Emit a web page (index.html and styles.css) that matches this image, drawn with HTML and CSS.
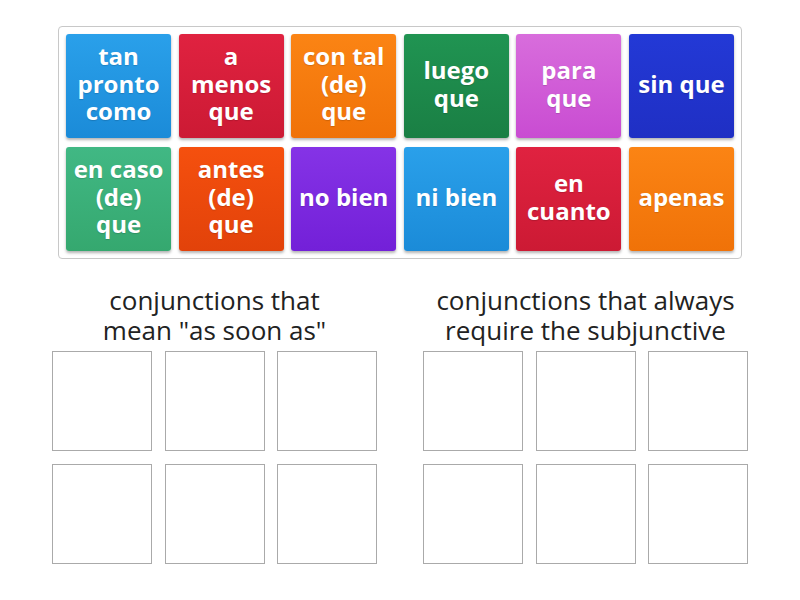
FILE: index.html
```html
<!DOCTYPE html>
<html>
<head>
<meta charset="utf-8">
<link rel="stylesheet" href="styles.css">
</head>
<body>
<div class="bank">
  <div class="tile c-blue">tan pronto como</div>
  <div class="tile c-red">a menos que</div>
  <div class="tile c-orange">con tal (de) que</div>
  <div class="tile c-green">luego que</div>
  <div class="tile c-pink">para que</div>
  <div class="tile c-navy">sin que</div>
  <div class="tile c-teal">en caso (de) que</div>
  <div class="tile c-redorange">antes (de) que</div>
  <div class="tile c-purple">no bien</div>
  <div class="tile c-blue">ni bien</div>
  <div class="tile c-red">en cuanto</div>
  <div class="tile c-orange">apenas</div>
</div>
<div class="groups">
  <div class="group">
    <div class="title">conjunctions that<br>mean "as soon as"</div>
    <div class="slots">
      <div class="slot"></div><div class="slot"></div><div class="slot"></div>
      <div class="slot"></div><div class="slot"></div><div class="slot"></div>
    </div>
  </div>
  <div class="group">
    <div class="title">conjunctions that always<br>require the subjunctive</div>
    <div class="slots">
      <div class="slot"></div><div class="slot"></div><div class="slot"></div>
      <div class="slot"></div><div class="slot"></div><div class="slot"></div>
    </div>
  </div>
</div>
</body>
</html>
```
FILE: styles.css
```css
html, body {
  margin: 0;
  padding: 0;
  background: #fff;
}
body {
  font-family: "Open Sans", "Liberation Sans", sans-serif;
  padding-top: 26px;
  width: 800px;
}
.bank {
  box-sizing: border-box;
  margin-left: 58px;
  width: 684px;
  border: 1px solid #c8c8c8;
  border-radius: 4px;
  padding: 7px;
  display: grid;
  grid-template-columns: repeat(6, 1fr);
  column-gap: 7.5px;
  row-gap: 9px;
}
.tile {
  box-sizing: border-box;
  height: 104px;
  border-radius: 3px;
  display: flex;
  align-items: center;
  justify-content: center;
  text-align: center;
  padding: 0 5px 5px;
  color: #fff;
  font-weight: 700;
  font-size: 24px;
  line-height: 27.5px;
  box-shadow: 0 2px 3px rgba(0,0,0,0.3);
  text-shadow: 0 1px 1px rgba(0,0,0,0.15);
}
.c-blue { background: linear-gradient(#2aa0ea, #1b8bd8); }
.c-red { background: linear-gradient(#e02240, #cc1a34); }
.c-orange { background: linear-gradient(#fb8414, #f07208); }
.c-green { background: linear-gradient(#209452, #1a7f44); }
.c-pink { background: linear-gradient(#d86ddc, #c94cd2); }
.c-navy { background: linear-gradient(#2339d6, #1f2fc4); }
.c-teal { background: linear-gradient(#41b884, #35a86f); }
.c-redorange { background: linear-gradient(#f5500e, #e2420a); }
.c-purple { background: linear-gradient(#8533e6, #7320d8); }
.groups {
  display: flex;
  margin-left: 52px;
  margin-top: 26px;
  column-gap: 46px;
}
.group {
  width: 325px;
}
.title {
  text-align: center;
  font-size: 26px;
  line-height: 30px;
  color: #222;
  margin-bottom: 6px;
}
.slots {
  display: grid;
  grid-template-columns: repeat(3, 100px);
  column-gap: 12.5px;
  row-gap: 13px;
}
.slot {
  box-sizing: border-box;
  width: 100px;
  height: 100px;
  border: 1px solid #aaa;
}
```
